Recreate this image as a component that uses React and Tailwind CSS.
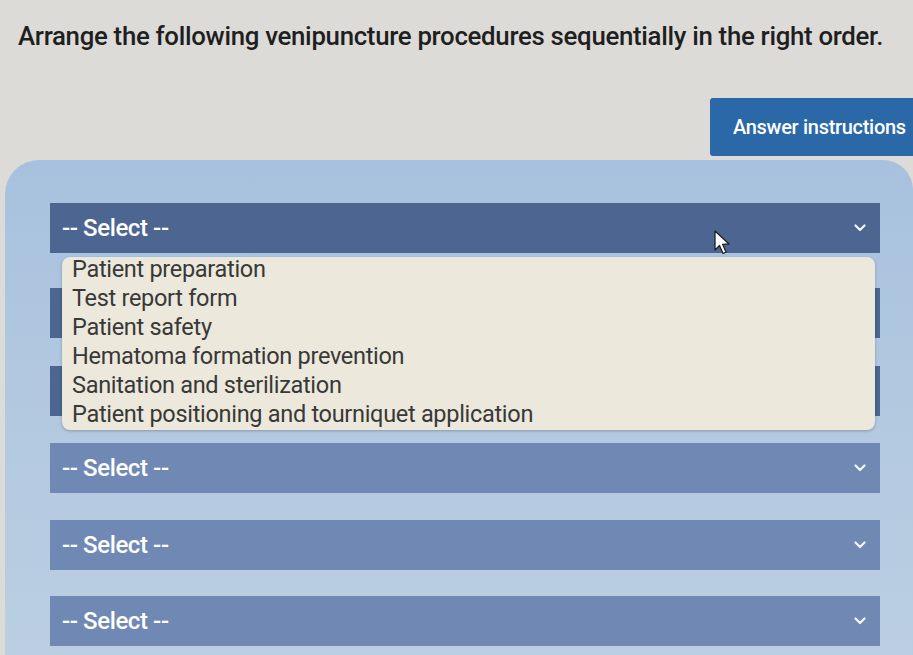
import React from "react";

function Chevron() {
  return (
    <svg width="12" height="8" viewBox="0 0 12 8" className="shrink-0">
      <polyline points="1.5,1.5 6,6 10.5,1.5" fill="none" stroke="#f2f4f8" strokeWidth="2.2" strokeLinecap="round" strokeLinejoin="round" />
    </svg>
  );
}

function Select({ dark, hidden, className = "" }) {
  return (
    <div
      className={`h-[50px] w-[830px] flex items-center justify-between pl-[12px] pr-[14px] ${dark ? "bg-[#4c6591]" : "bg-[#6f89b4]"} ${className}`}
    >
      <span className={`text-[24px] font-medium text-white tracking-[-0.4px] ${hidden ? "invisible" : ""}`}>-- Select --</span>
      <Chevron />
    </div>
  );
}

const options = [
  "Patient preparation",
  "Test report form",
  "Patient safety",
  "Hematoma formation prevention",
  "Sanitation and sterilization",
  "Patient positioning and tourniquet application",
];

export default function App() {
  return (
    <div
      className="relative w-[913px] h-[655px] overflow-hidden bg-[#dcdbd7]"
      style={{ fontFamily: "Roboto, 'Liberation Sans', sans-serif" }}
    >
      <h1 className="pt-[20px] pl-[18px] text-[25.8px] leading-[32px] font-medium text-[#1f1f1f] tracking-[-0.3px] whitespace-nowrap">
        Arrange the following venipuncture procedures sequentially in the right order.
      </h1>
      <div className="mt-[46px] ml-[710px] h-[58px] w-[220px] bg-[#2b68a7] rounded-l-[3px] flex items-center pl-[23px]">
        <span className="text-[20px] font-medium text-white tracking-[-0.3px]">Answer instructions</span>
      </div>
      <div className="relative mt-[4px] ml-[5px] h-[520px] rounded-tl-[34px] rounded-tr-[30px] bg-gradient-to-b from-[#a7c1de] via-[#b3c9e0] to-[#bccfe2] pl-[45px] pt-[43px] flex flex-col">
        <Select dark />
        <Select dark hidden className="mt-[35px]" />
        <Select dark hidden className="mt-[28px]" />
        <Select className="mt-[27px]" />
        <Select className="mt-[27px]" />
        <Select className="mt-[26px]" />

        <div className="absolute left-[57px] top-[97px] w-[813px] h-[173px] rounded-[8px] bg-[#ece8dc] shadow-[0_1px_3px_rgba(0,0,0,0.25)] pl-[10px]">
          {options.map((o) => (
            <div key={o} className="h-[29px] leading-[25px] text-[23.5px] text-[#383838] tracking-[-0.3px] whitespace-nowrap">
              {o}
            </div>
          ))}
        </div>

        <svg className="absolute left-[708px] top-[70px]" width="18" height="26" viewBox="0 0 18 26">
          <path d="M2 1 L2 20 L6.5 15.5 L10 23.5 L13 22 L9.6 14.3 L16 14 Z" fill="#ffffff" stroke="#222" strokeWidth="1.3" strokeLinejoin="round" />
        </svg>
      </div>
    </div>
  );
}
